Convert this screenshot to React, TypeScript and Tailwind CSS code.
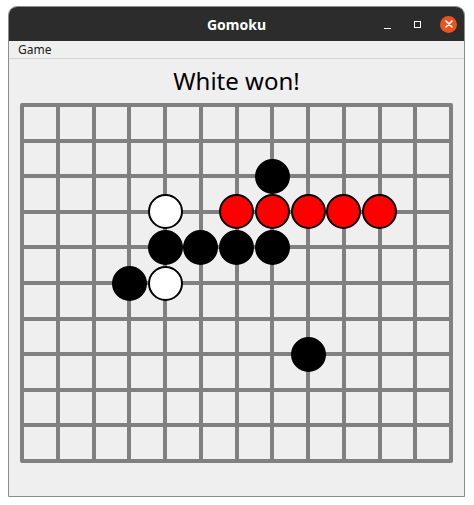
const COLS = 12;
const ROWS = 10;
const STEP_X = 35.75;
const STEP_Y = 35.6;

type Stone = { x: number; y: number; c: 'black' | 'white' | 'red' };

const stones: Stone[] = [
  { x: 7, y: 2, c: 'black' },
  { x: 4, y: 3, c: 'white' },
  { x: 6, y: 3, c: 'red' },
  { x: 7, y: 3, c: 'red' },
  { x: 8, y: 3, c: 'red' },
  { x: 9, y: 3, c: 'red' },
  { x: 10, y: 3, c: 'red' },
  { x: 4, y: 4, c: 'black' },
  { x: 5, y: 4, c: 'black' },
  { x: 6, y: 4, c: 'black' },
  { x: 7, y: 4, c: 'black' },
  { x: 3, y: 5, c: 'black' },
  { x: 4, y: 5, c: 'white' },
  { x: 8, y: 7, c: 'black' },
];

const stoneColor = {
  black: 'bg-black',
  white: 'bg-white',
  red: 'bg-[#ff0000]',
};

function Board() {
  return (
    <div className="relative w-[433px] h-[360px]">
      <div className="grid grid-cols-12 grid-rows-10 gap-[4px] p-[4px] w-full h-full bg-[#808080] rounded-[2px]">
        {Array.from({ length: COLS * ROWS }).map((_, i) => (
          <div key={i} className="bg-[#efefef]" />
        ))}
      </div>
      {stones.map((s, i) => (
        <div
          key={i}
          className={`absolute w-[35px] h-[35px] rounded-full border-2 border-black ${stoneColor[s.c]}`}
          style={{ left: 2 + s.x * STEP_X - 17.5, top: 2 + s.y * STEP_Y - 17.5 }}
        />
      ))}
    </div>
  );
}

export default function App() {
  return (
    <div
      className="w-[474px] h-[505px] bg-white pt-[6px] pl-[8px]"
      style={{ fontFamily: '"Noto Sans", "Open Sans", sans-serif' }}
    >
      <div className="w-[457px] h-[491px] flex flex-col bg-[#efefef] border border-[#8c8c8c] rounded-t-[9px] overflow-hidden">
        <div className="h-[34px] shrink-0 bg-[#2c2c2c] flex items-center relative">
          <div className="flex-1 text-center text-white text-[14px] font-bold">Gomoku</div>
          <div className="absolute right-[7px] top-0 h-full flex items-center gap-[16px]">
            <div className="w-[14px] h-[14px] flex items-end justify-center pb-[2px]">
              <div className="w-[7px] h-[1.5px] bg-white" />
            </div>
            <div className="w-[14px] h-[14px] flex items-center justify-center">
              <div className="w-[7px] h-[7px] border-[1.5px] border-white" />
            </div>
            <div className="w-[17px] h-[17px] rounded-full bg-[#e95420] flex items-center justify-center">
              <svg width="8" height="8" viewBox="0 0 8 8">
                <path d="M1 1 L7 7 M7 1 L1 7" stroke="white" strokeWidth="1.6" strokeLinecap="round" />
              </svg>
            </div>
          </div>
        </div>
        <div className="h-[18px] shrink-0 border-b border-[#d4d4d4] flex items-center pl-[9px] text-[12px] text-[#1a1a1a]">
          Game
        </div>
        <div className="h-[44px] shrink-0 flex items-center justify-center text-[24px] text-black">
          White won!
        </div>
        <div className="flex justify-center">
          <Board />
        </div>
      </div>
    </div>
  );
}
